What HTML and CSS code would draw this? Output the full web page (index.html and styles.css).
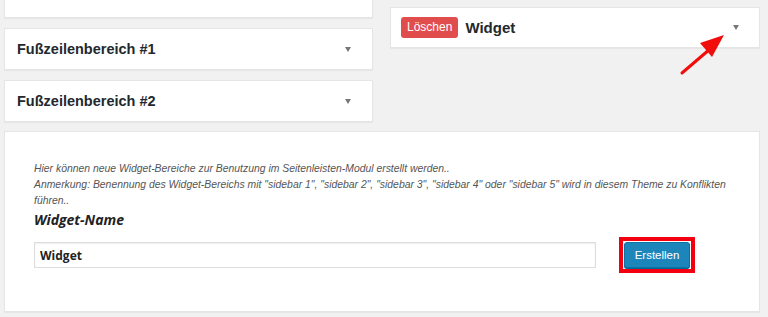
FILE: index.html
```html
<!DOCTYPE html>
<html lang="de">
<head>
  <meta charset="UTF-8">
  <title>Widget-Bereiche</title>
  <link rel="stylesheet" href="styles.css">
</head>
<body>
  <div class="areas">
    <div class="col col-left">
      <div class="area-box"><h2></h2></div>
      <div class="area-box"><h2>Fußzeilenbereich #1</h2><span class="toggle"></span></div>
      <div class="area-box"><h2>Fußzeilenbereich #2</h2><span class="toggle"></span></div>
    </div>
    <div class="col col-right">
      <div class="area-box wide">
        <span class="delete">Löschen</span>
        <h2 class="big">Widget</h2>
        <span class="toggle"></span>
      </div>
    </div>
  </div>

  <!-- new widget area form -->
  <div class="panel">
    <p class="hint">Hier können neue Widget-Bereiche zur Benutzung im Seitenleisten-Modul erstellt werden..<br>Anmerkung: Benennung des Widget-Bereichs mit "sidebar 1", "sidebar 2", "sidebar 3", "sidebar 4" oder "sidebar 5" wird in diesem Theme zu Konflikten führen..</p>
    <h3 class="label">Widget-Name</h3>
    <div class="form-row">
      <input class="name-input" type="text" value="Widget">
      <div class="highlight">
        <button class="create">Erstellen</button>
      </div>
    </div>
  </div>

  <!-- annotation arrow -->
  <svg class="pointer" width="60" height="50" viewBox="0 0 60 50">
    <line x1="6" y1="44" x2="34" y2="20" stroke="#f20d0d" stroke-width="3" stroke-linecap="round"/>
    <polygon points="48,6 24,14 36,28" fill="#f20d0d"/>
  </svg>
</body>
</html>
```

FILE: styles.css
```css
body {
  margin: 0;
  padding: 0;
  background: #f1f1f1;
  font-family: 'Liberation Sans', Arial, sans-serif;
  color: #23282d;
  overflow: hidden;
  position: relative;
  height: 317px;
}

.areas {
  display: flex;
  align-items: flex-start;
  padding-left: 4px;
}

.col {
  display: flex;
  flex-direction: column;
  gap: 10px;
}

.col-left {
  width: 369px;
  margin-top: -24px;
}

.col-right {
  width: 370px;
  margin-left: 17px;
  margin-top: 7px;
}

.area-box {
  box-sizing: border-box;
  height: 42px;
  background: #fff;
  border: 1px solid #e5e5e5;
  box-shadow: 0 1px 1px rgba(0, 0, 0, 0.04);
  display: flex;
  align-items: center;
  padding: 0 21px 0 12px;
}

.area-box.wide {
  height: 41px;
  padding: 0 20px 0 10px;
}

.area-box h2 {
  margin: 0;
  flex: 1;
  font-size: 14.5px;
  font-weight: bold;
}

.area-box h2.big {
  font-size: 15px;
}

.toggle {
  width: 0;
  height: 0;
  border-left: 3.5px solid transparent;
  border-right: 3.5px solid transparent;
  border-top: 5px solid #777;
}

.delete {
  background: #e14d4d;
  color: #fff;
  font-size: 12px;
  border-radius: 3px;
  padding: 4px 6px;
  margin-right: 7px;
  line-height: 13px;
}

.panel {
  margin: 9px 8px 0 4px;
  height: 181px;
  box-sizing: border-box;
  background: #fff;
  border: 1px solid #e5e5e5;
  box-shadow: 0 1px 1px rgba(0, 0, 0, 0.04);
  padding: 29px 30px 0 29px;
}

.hint {
  margin: 0;
  font-size: 10.4px;
  line-height: 16px;
  font-style: italic;
  color: #555;
}

.label {
  margin: 2px 0 8px;
  font-family: 'Open Sans', sans-serif;
  font-size: 14px;
  line-height: 18px;
  font-style: italic;
  font-weight: bold;
  color: #222;
}

.form-row {
  display: flex;
  align-items: center;
}

.name-input {
  box-sizing: border-box;
  width: 562px;
  height: 26px;
  margin: 0 23px 0 0;
  border: 1px solid #ddd;
  box-shadow: inset 0 1px 2px rgba(0, 0, 0, 0.07);
  padding: 0 5px;
  font-family: 'Open Sans', sans-serif;
  font-weight: bold;
  font-size: 12px;
  color: #222;
  outline: none;
}

.highlight {
  border: 4px solid #f2000f;
  padding: 1px;
  display: flex;
}

.create {
  width: 66px;
  height: 26px;
  background: #1c86bb;
  border: 1px solid #0a73a6;
  border-radius: 3px;
  color: #fff;
  font-family: 'Liberation Sans', Arial, sans-serif;
  font-size: 11.5px;
  padding: 0;
  box-shadow: 0 1px 0 #006799;
}

.pointer {
  position: absolute;
  left: 676px;
  top: 29px;
}
```
